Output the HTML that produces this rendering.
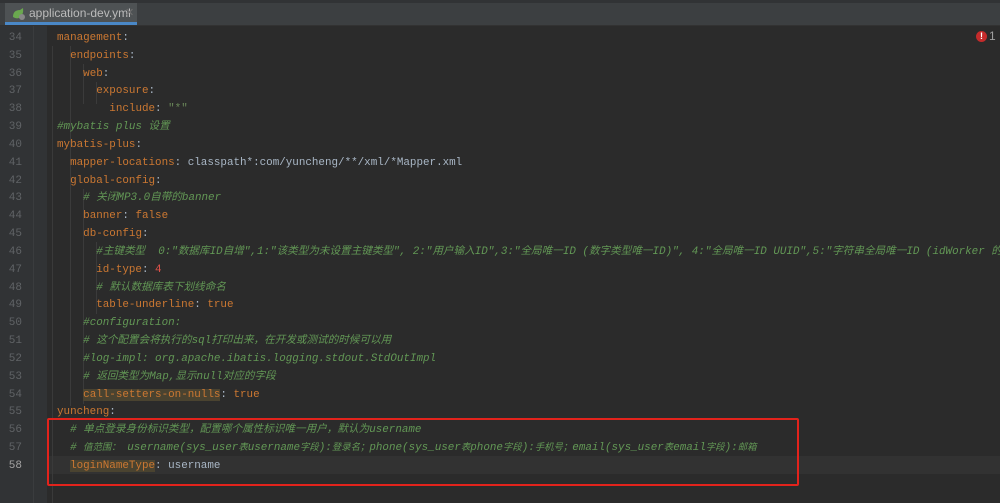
<!DOCTYPE html>
<html><head><meta charset="utf-8"><style>
body{margin:0;width:1000px;height:503px;overflow:hidden;background:#2b2b2b;font-family:"Liberation Mono","Noto Sans CJK SC",monospace;position:relative}
.top{position:absolute;left:0;top:0;width:1000px;height:3px;background:#313335}
.tabbar{position:absolute;left:0;top:3px;width:1000px;height:22px;background:#3c3f41;border-bottom:1px solid #323232}
.tab{position:absolute;left:5px;top:0;width:132px;height:22px;background:#4e5254;}
.tab .u{position:absolute;left:0;bottom:0;width:132px;height:3px;background:#4a88c7}
.tab span{position:absolute;left:24px;top:3px;font:12px "Liberation Sans",sans-serif;color:#bbbbbb}
.tab i{position:absolute;left:120px;top:3px;font:11px "Liberation Sans",sans-serif;color:#6e6e6e;font-style:normal}
.gutter{position:absolute;left:0;top:26px;width:47px;height:477px;background:#313335}
.gl{position:absolute;left:33px;top:26px;width:1px;height:477px;background:#3a3c3e}
.ln{position:absolute;left:0;width:22px;text-align:right;font-size:11px;color:#606366;line-height:17.83px}
.code{position:absolute;left:57px;width:943px;overflow:hidden;white-space:pre;font-size:10.9px;line-height:17.83px;color:#a9b7c6}
.code div{height:17.83px;overflow:visible}
.k{color:#cc7832}.c{color:#629755;font-style:italic}.s{color:#6a8759}.r{color:#e0524a}
b{font-weight:normal;font-size:10.6px;line-height:0}
.n b{font-size:9.4px}
.hl{position:absolute;left:47px;top:456px;width:953px;height:18px;background:#323232}
.box{position:absolute;left:47px;top:418px;width:748px;height:64px;border:2px solid #e3231c;border-radius:2px}
.guide{position:absolute;width:1px;background:#3b3b3b}
</style></head><body>
<div class="top"></div>
<div class="tabbar"><div class="tab">
<svg style="position:absolute;left:6px;top:4px" width="15" height="14"><path d="M2 10 Q2 3 9 3 L12 1 Q13 8 8 11 Q5 12 2 10Z" fill="#6aa84f"/><circle cx="11" cy="10" r="3" fill="#888"/></svg>
<span>application-dev.yml</span><i>✕</i><div class="u"></div></div></div>
<div class="gutter"></div><div class="gl"></div>
<div class="hl"></div>
<div style="position:absolute;left:976px;top:31px;width:11px;height:11px;border-radius:50%;background:#c42b2b;color:#fff;font:bold 9px 'Liberation Sans';text-align:center;line-height:11px">!</div>
<div style="position:absolute;left:989px;top:29px;font:12px 'Liberation Sans';color:#a0a0a0">1</div>

<div class="guide" style="left:70px;top:46px;height:360px"></div>
<div class="guide" style="left:83px;top:64px;height:40px"></div>
<div class="guide" style="left:96px;top:82px;height:22px"></div>
<div class="guide" style="left:83px;top:189px;height:215px"></div>
<div class="guide" style="left:96px;top:242px;height:72px"></div>
<div class="guide" style="left:52px;top:46px;height:457px;background:#3a3a3a"></div>

<div class="ln" style="top:30px">34<br>35<br>36<br>37<br>38<br>39<br>40<br>41<br>42<br>43<br>44<br>45<br>46<br>47<br>48<br>49<br>50<br>51<br>52<br>53<br>54<br>55<br>56<br>57<br><span style="color:#a4a3a3">58</span></div>

<div class="code" style="top:30px"><div><span class="k">management</span>:</div><div>  <span class="k">endpoints</span>:</div><div>    <span class="k">web</span>:</div><div>      <span class="k">exposure</span>:</div><div>        <span class="k">include</span>: <span class="s">"*"</span></div><div><span class="c">#mybatis plus <b>设置</b></span></div><div><span class="k">mybatis-plus</span>:</div><div>  <span class="k">mapper-locations</span>: classpath*:com/yuncheng/**/xml/*Mapper.xml</div><div>  <span class="k">global-config</span>:</div><div>    <span class="c"># <b>关闭</b>MP3.0<b>自带的</b>banner</span></div><div>    <span class="k">banner</span>: <span class="k">false</span></div><div>    <span class="k">db-config</span>:</div><div>      <span class="c">#<b>主键类型</b>  0:"<b>数据库</b>ID<b>自增</b>",1:"<b>该类型为未设置主键类型</b>", 2:"<b>用户输入</b>ID",3:"<b>全局唯一</b>ID (<b>数字类型唯一</b>ID)", 4:"<b>全局唯一</b>ID UUID",5:"<b>字符串全局唯一</b>ID (idWorker <b>的字符串表示</b>)";</span></div><div>      <span class="k">id-type</span>: <span class="r">4</span></div><div>      <span class="c"># <b>默认数据库表下划线命名</b></span></div><div>      <span class="k">table-underline</span>: <span class="k">true</span></div><div>    <span class="c">#configuration:</span></div><div>    <span class="c"># <b>这个配置会将执行的</b>sql<b>打印出来，在开发或测试的时候可以用</b></span></div><div>    <span class="c">#log-impl: org.apache.ibatis.logging.stdout.StdOutImpl</span></div><div>    <span class="c"># <b>返回类型为</b>Map,<b>显示</b>null<b>对应的字段</b></span></div><div>    <span class="k" style="background:#4a4330">call-setters-on-nulls</span>: <span class="k">true</span></div><div><span class="k">yuncheng</span>:</div><div>  <span class="c"># <b>单点登录身份标识类型，配置哪个属性标识唯一用户，默认为</b>username</span></div><div class="n">  <span class="c"># <b>值范围：</b> username(sys_user<b>表</b>username<b>字段</b>):<b>登录名；</b>phone(sys_user<b>表</b>phone<b>字段</b>):<b>手机号；</b>email(sys_user<b>表</b>email<b>字段</b>):<b>邮箱</b></span></div><div>  <span class="k" style="background:#4a4330">loginNameType</span>: username</div></div>
<div class="box"></div>
</body></html>
